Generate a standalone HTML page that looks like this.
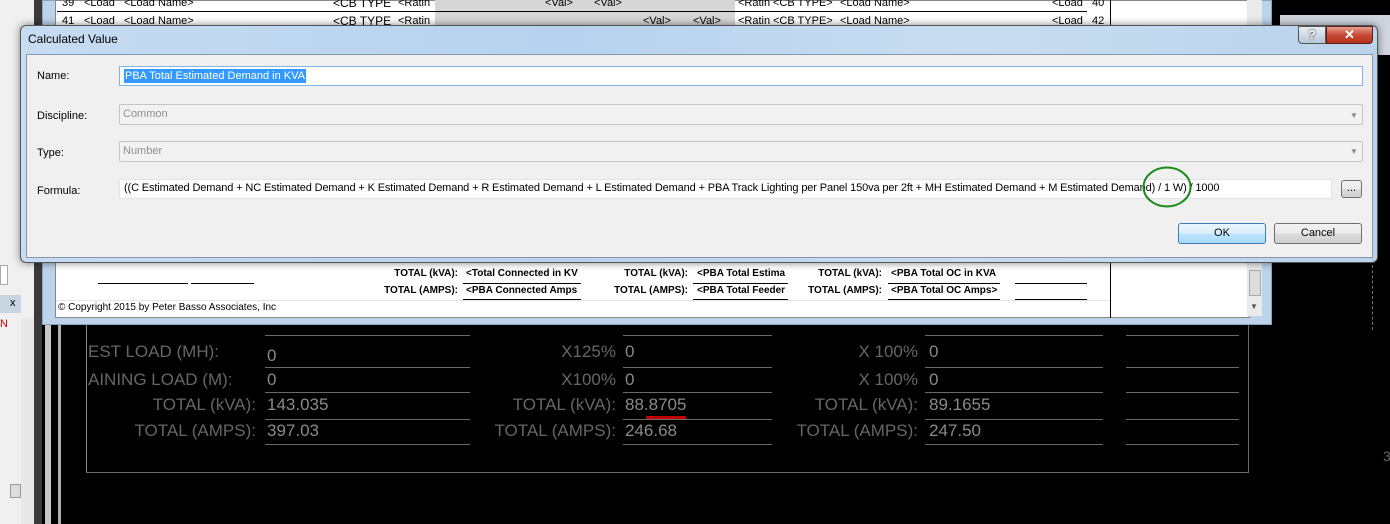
<!DOCTYPE html>
<html><head><meta charset="utf-8"><style>
*{margin:0;padding:0;box-sizing:border-box}
body{width:1390px;height:524px;background:#000;position:relative;overflow:hidden;font-family:"Liberation Sans",sans-serif}
.a{position:absolute;white-space:nowrap}
.t{font-size:11px;color:#000}
.g{color:#8a8a8a;font-size:17px}
.l{color:#666;font-size:17px}
.ln{position:absolute;height:1px;background:#6a6a6a}
.lbl{font-size:11px;color:#000;position:absolute}
.box{position:absolute;background:#fff;border:1px solid #abadb3}
.dis{position:absolute;background:#f2f2f2;border:1px solid #c5c5c5;border-radius:2px;font-size:11px;color:#8d8d8d;padding:3px 0 0 3px}
.btn{position:absolute;border:1px solid #707070;border-radius:3px;background:linear-gradient(#f2f2f2,#ebebeb 50%,#dddddd 50%,#cfcfcf);font-size:11px;text-align:center;line-height:18px}
</style></head><body>

<!-- left strip -->
<div class="a" style="left:0;top:0;width:34px;height:524px;background:#f0f0f0"></div>
<div class="a" style="left:0;top:265px;width:8px;height:20px;background:#fff;border:1px solid #aaa"></div>
<div class="a" style="left:0;top:295px;width:21px;height:18px;background:#c8d4e0;font-size:11px;padding:2px 0 0 10px">x</div>
<div class="a" style="left:0;top:318px;font-size:11px;color:#c00">N</div>
<div class="a" style="left:21px;top:318px;width:13px;height:206px;background:#e8e8e8"></div>
<div class="a" style="left:10px;top:484px;width:11px;height:14px;background:#ddd;border:1px solid #999"></div>
<div class="a" style="left:34px;top:0;width:8px;height:524px;background:#3a3a3a"></div>
<div class="a" style="left:45px;top:0;width:6px;height:524px;background:#c8c8c8"></div>
<div class="a" style="left:58px;top:0;width:3px;height:524px;background:#b0b0b0"></div>
<div class="a" style="left:86px;top:325px;width:1px;height:148px;background:#888"></div>

<!-- right top -->
<div class="a" style="left:1280px;top:15px;width:110px;height:40px;background:#d0d6de"></div>
<div class="a" style="left:1372px;top:265px;width:0;height:65px;border-left:1px dashed #777"></div>
<div class="a" style="left:1383px;top:448px;font-size:14px;color:#666">3</div>

<!-- background window -->
<div class="a" style="left:42px;top:0;width:1230px;height:325px;background:#bcd3ea;border:1px solid #8aa4c0"></div>
<div class="a" style="left:55px;top:0;width:1195px;height:318px;background:#fff;border:1px solid #888"></div>
<div class="a" style="left:1247px;top:0;width:15px;height:316px;background:#eaeaea"></div>
<div class="a" style="left:1249px;top:270px;width:12px;height:26px;background:#ddd;border:1px solid #aaa"></div>
<div class="a" style="left:1250px;top:302px;font-size:8px;color:#555">▼</div>

<!-- top rows -->
<div class="a" style="left:435px;top:0;width:300px;height:28px;background:#d6d6d6"></div>
<div class="a" style="left:57px;top:11px;width:1030px;height:1px;background:#000"></div>
<div class="a" style="left:57px;top:28px;width:1030px;height:1px;background:#000"></div>
<div class="a t" style="left:62px;top:-3px">39</div>
<div class="a t" style="left:62px;top:15px">41</div>
<div class="a t" style="left:84px;top:-3px">&lt;Load</div>
<div class="a t" style="left:84px;top:15px">&lt;Load</div>
<div class="a t" style="left:124px;top:-3px">&lt;Load Name&gt;</div>
<div class="a t" style="left:124px;top:15px">&lt;Load Name&gt;</div>
<div class="a t" style="left:333px;top:-4px;font-size:12px">&lt;CB TYPE</div>
<div class="a t" style="left:333px;top:14px;font-size:12px">&lt;CB TYPE</div>
<div class="a t" style="left:398px;top:-3px">&lt;Ratin</div>
<div class="a t" style="left:398px;top:15px">&lt;Ratin</div>
<div class="a t" style="left:545px;top:-3px">&lt;Val&gt;</div>
<div class="a t" style="left:594px;top:-3px">&lt;Val&gt;</div>
<div class="a t" style="left:643px;top:15px">&lt;Val&gt;</div>
<div class="a t" style="left:693px;top:15px">&lt;Val&gt;</div>
<div class="a t" style="left:738px;top:-3px">&lt;Ratin</div>
<div class="a t" style="left:738px;top:15px">&lt;Ratin</div>
<div class="a t" style="left:773px;top:-3px">&lt;CB TYPE&gt;</div>
<div class="a t" style="left:773px;top:15px">&lt;CB TYPE&gt;</div>
<div class="a t" style="left:840px;top:-3px">&lt;Load Name&gt;</div>
<div class="a t" style="left:840px;top:15px">&lt;Load Name&gt;</div>
<div class="a t" style="left:1052px;top:-3px">&lt;Load</div>
<div class="a t" style="left:1052px;top:15px">&lt;Load</div>
<div class="a t" style="left:1092px;top:-3px">40</div>
<div class="a t" style="left:1092px;top:15px">42</div>
<div class="a" style="left:1110px;top:0;width:1px;height:318px;background:#000"></div>

<!-- bottom rows of bg window -->
<div class="a" style="left:98px;top:283px;width:90px;height:1px;background:#000"></div>
<div class="a" style="left:191px;top:283px;width:63px;height:1px;background:#000"></div>
<div class="a t" style="left:330px;top:268px;width:128px;text-align:right;font-weight:bold;font-size:10px">TOTAL (kVA):</div>
<div class="a t" style="left:330px;top:285px;width:128px;text-align:right;font-weight:bold;font-size:10px">TOTAL (AMPS):</div>
<div class="a t" style="left:466px;top:268px;font-weight:bold;font-size:10px">&lt;Total Connected in KV</div>
<div class="a t" style="left:466px;top:285px;font-weight:bold;font-size:10px">&lt;PBA Connected Amps</div>
<div class="a" style="left:463px;top:283px;width:118px;height:1px;background:#000"></div>
<div class="a" style="left:463px;top:299px;width:118px;height:1px;background:#000"></div>
<div class="a t" style="left:590px;top:268px;width:98px;text-align:right;font-weight:bold;font-size:10px">TOTAL (kVA):</div>
<div class="a t" style="left:590px;top:285px;width:98px;text-align:right;font-weight:bold;font-size:10px">TOTAL (AMPS):</div>
<div class="a t" style="left:697px;top:268px;font-weight:bold;font-size:10px">&lt;PBA Total Estima</div>
<div class="a t" style="left:697px;top:285px;font-weight:bold;font-size:10px">&lt;PBA Total Feeder</div>
<div class="a" style="left:693px;top:283px;width:95px;height:1px;background:#000"></div>
<div class="a" style="left:693px;top:299px;width:95px;height:1px;background:#000"></div>
<div class="a t" style="left:785px;top:268px;width:97px;text-align:right;font-weight:bold;font-size:10px">TOTAL (kVA):</div>
<div class="a t" style="left:785px;top:285px;width:97px;text-align:right;font-weight:bold;font-size:10px">TOTAL (AMPS):</div>
<div class="a t" style="left:891px;top:268px;font-weight:bold;font-size:10px">&lt;PBA Total OC in KVA</div>
<div class="a t" style="left:891px;top:285px;font-weight:bold;font-size:10px">&lt;PBA Total OC Amps&gt;</div>
<div class="a" style="left:888px;top:283px;width:112px;height:1px;background:#000"></div>
<div class="a" style="left:888px;top:299px;width:112px;height:1px;background:#000"></div>
<div class="a" style="left:1015px;top:283px;width:72px;height:1px;background:#000"></div>
<div class="a" style="left:1015px;top:299px;width:72px;height:1px;background:#000"></div>
<div class="a" style="left:56px;top:300px;width:1054px;height:1px;background:#e4e4e4"></div>
<div class="a t" style="left:58px;top:302px;font-size:10px">© Copyright 2015 by Peter Basso Associates, Inc</div>

<!-- black area content -->
<div class="a l" style="left:88px;top:342px">EST LOAD (MH):</div>
<div class="a l" style="left:88px;top:370px">AINING LOAD (M):</div>
<div class="a l" style="left:20px;top:395px;width:236px;text-align:right">TOTAL (kVA):</div>
<div class="a l" style="left:20px;top:421px;width:236px;text-align:right">TOTAL (AMPS):</div>
<div class="a g" style="left:267px;top:346px">0</div>
<div class="a g" style="left:267px;top:370px">0</div>
<div class="a g" style="left:267px;top:395px">143.035</div>
<div class="a g" style="left:267px;top:421px">397.03</div>
<div class="a l" style="left:400px;top:342px;width:216px;text-align:right">X125%</div>
<div class="a l" style="left:400px;top:370px;width:216px;text-align:right">X100%</div>
<div class="a l" style="left:400px;top:395px;width:216px;text-align:right">TOTAL (kVA):</div>
<div class="a l" style="left:400px;top:421px;width:216px;text-align:right">TOTAL (AMPS):</div>
<div class="a g" style="left:625px;top:342px">0</div>
<div class="a g" style="left:625px;top:370px">0</div>
<div class="a g" style="left:625px;top:395px">88.8705</div>
<div class="a g" style="left:625px;top:421px">246.68</div>
<div class="a" style="left:646px;top:416px;width:40px;height:3px;background:#c00000"></div>
<div class="a l" style="left:700px;top:342px;width:218px;text-align:right">X 100%</div>
<div class="a l" style="left:700px;top:370px;width:218px;text-align:right">X 100%</div>
<div class="a l" style="left:700px;top:395px;width:218px;text-align:right">TOTAL (kVA):</div>
<div class="a l" style="left:700px;top:421px;width:218px;text-align:right">TOTAL (AMPS):</div>
<div class="a g" style="left:929px;top:342px">0</div>
<div class="a g" style="left:929px;top:370px">0</div>
<div class="a g" style="left:929px;top:395px">89.1655</div>
<div class="a g" style="left:929px;top:421px">247.50</div>

<div class="ln" style="left:265px;top:335px;width:205px"></div>
<div class="ln" style="left:265px;top:367px;width:205px"></div>
<div class="ln" style="left:265px;top:392px;width:205px"></div>
<div class="ln" style="left:265px;top:419px;width:205px"></div>
<div class="ln" style="left:265px;top:444px;width:205px"></div>
<div class="ln" style="left:623px;top:335px;width:149px"></div>
<div class="ln" style="left:623px;top:367px;width:149px"></div>
<div class="ln" style="left:623px;top:392px;width:149px"></div>
<div class="ln" style="left:623px;top:419px;width:149px"></div>
<div class="ln" style="left:623px;top:444px;width:149px"></div>
<div class="ln" style="left:925px;top:335px;width:178px"></div>
<div class="ln" style="left:925px;top:367px;width:178px"></div>
<div class="ln" style="left:925px;top:392px;width:178px"></div>
<div class="ln" style="left:925px;top:419px;width:178px"></div>
<div class="ln" style="left:925px;top:444px;width:178px"></div>
<div class="ln" style="left:1126px;top:335px;width:113px"></div>
<div class="ln" style="left:1126px;top:367px;width:113px"></div>
<div class="ln" style="left:1126px;top:392px;width:113px"></div>
<div class="ln" style="left:1126px;top:419px;width:113px"></div>
<div class="ln" style="left:1126px;top:444px;width:113px"></div>
<div class="ln" style="left:86px;top:472px;width:1163px"></div>
<div class="a" style="left:1248px;top:325px;width:1px;height:148px;background:#6a6a6a"></div>

<!-- dialog -->
<div class="a" style="left:20px;top:25px;width:1358px;height:238px;border:1px solid #555;border-radius:6px;background:linear-gradient(90deg,#c6dcf2,#b6d2ee 40%,#c9ddf0 70%,#b9d3ec);box-shadow:0 0 8px rgba(0,0,0,.5)"></div>
<div class="a" style="left:28px;top:32px;font-size:12px;color:#000">Calculated Value</div>
<div class="a" style="left:1298px;top:26px;width:28px;height:18px;border:1px solid #555;border-radius:0 0 0 4px;background:linear-gradient(#e8eef5,#b8c6d6);font-size:13px;font-weight:bold;color:#fff;text-align:center;line-height:16px;text-shadow:0 0 2px #000">?</div>
<div class="a" style="left:1326px;top:26px;width:47px;height:18px;border:1px solid #5a2020;border-radius:0 0 4px 0;background:linear-gradient(#e8a090,#c74a36 50%,#b83018);font-size:13px;font-weight:bold;color:#fff;text-align:center;line-height:16px">✕</div>
<div class="a" style="left:26px;top:54px;width:1347px;height:204px;background:#f0f0f0;border:1px solid #8a99aa"></div>

<div class="lbl" style="left:37px;top:70px">Name:</div>
<div class="box" style="left:119px;top:66px;width:1244px;height:20px;border-color:#7eb4ea"></div>
<div class="a" style="left:124px;top:69px;height:14px;background:#3399ff;color:#fff;font-size:11px;padding:0 1px;line-height:14px">PBA Total Estimated Demand in KVA</div>
<div class="lbl" style="left:37px;top:110px">Discipline:</div>
<div class="dis" style="left:119px;top:104px;width:1244px;height:21px">Common</div>
<div class="a" style="left:1350px;top:111px;font-size:8px;color:#888">▼</div>
<div class="lbl" style="left:37px;top:147px">Type:</div>
<div class="dis" style="left:119px;top:141px;width:1244px;height:21px">Number</div>
<div class="a" style="left:1350px;top:147px;font-size:8px;color:#888">▼</div>
<div class="lbl" style="left:37px;top:185px">Formula:</div>
<div class="box" style="left:119px;top:179px;width:1213px;height:20px;border-color:#e2e3ea;font-size:11px;padding:2px 0 0 4px;white-space:nowrap;letter-spacing:-0.13px">((C Estimated Demand + NC Estimated Demand + K Estimated Demand + R Estimated Demand + L Estimated Demand + PBA Track Lighting per Panel 150va per 2ft + MH Estimated Demand + M Estimated Demand) / 1 W) / 1000</div>
<div class="btn" style="left:1341px;top:180px;width:21px;height:18px;line-height:14px">...</div>
<div class="btn" style="left:1178px;top:223px;width:88px;height:21px;border-color:#3c7fb1;background:linear-gradient(#eaf6fd,#d9f0fc 50%,#bee6fd 50%,#a7d9f5)">OK</div>
<div class="btn" style="left:1274px;top:223px;width:88px;height:21px">Cancel</div>

<svg class="a" style="left:1135px;top:160px" width="70" height="55"><ellipse cx="32" cy="27" rx="23.5" ry="19.5" fill="none" stroke="#1a8a1a" stroke-width="2"/></svg>
</body></html>
